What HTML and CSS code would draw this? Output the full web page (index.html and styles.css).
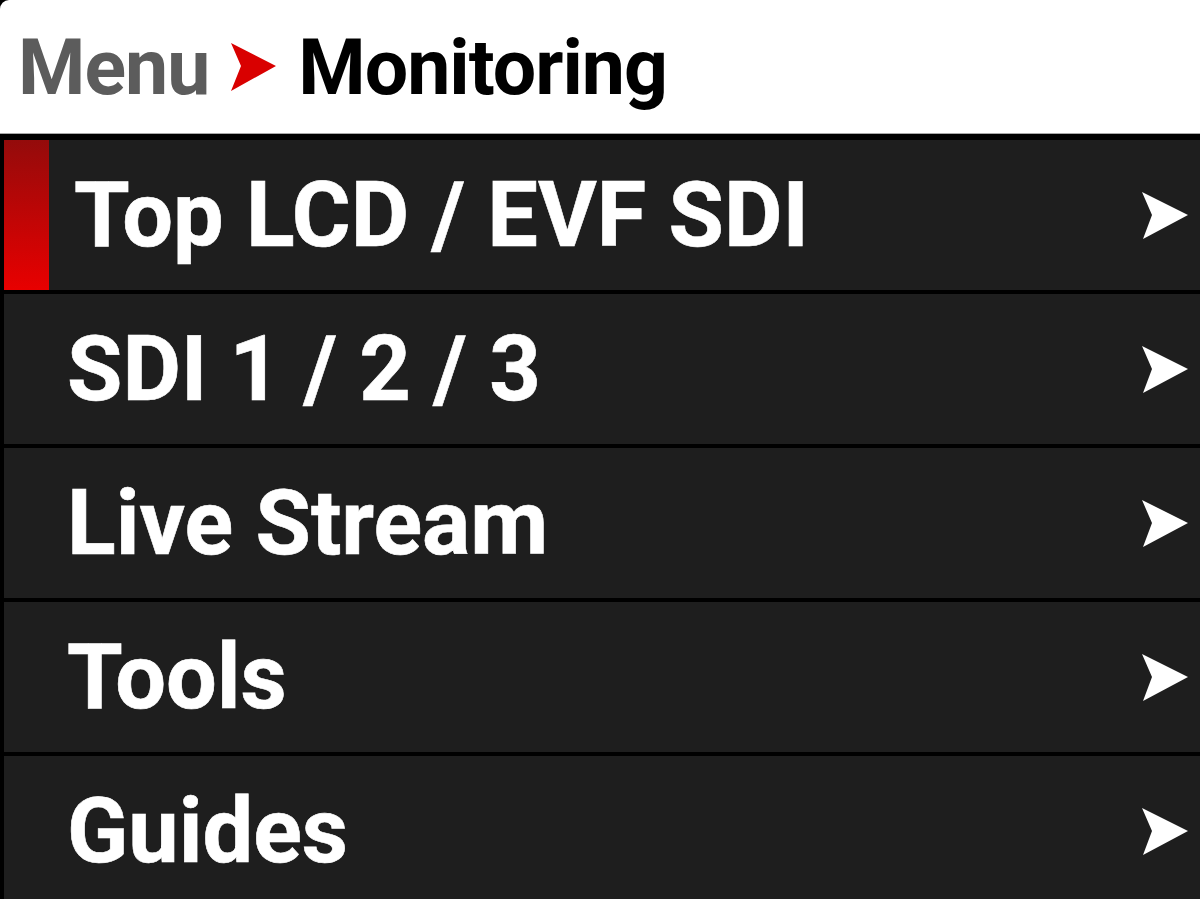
FILE: index.html
```html
<!DOCTYPE html>
<html lang="en">
<head>
<meta charset="utf-8">
<title>Menu - Monitoring</title>
<link rel="stylesheet" href="styles.css">
</head>
<body>
<div class="screen">
  <header class="crumb">
    <span class="crumb-parent">Menu</span>
    <svg class="crumb-sep" viewBox="0 0 45 48" width="45" height="48" aria-hidden="true">
      <path d="M0 0 L45 23 L0 48 L10 23 Z" fill="#d90000"/>
    </svg>
    <span class="crumb-current">Monitoring</span>
  </header>
  <ul class="menu">
    <li class="item selected"><span class="marker"></span><span class="label">Top LCD / EVF SDI</span><svg class="chev" viewBox="0 0 46 47" width="46" height="47" aria-hidden="true"><path d="M0 0 L46 23 L1 47 L10 23 Z" fill="#fff"/></svg></li>
    <li class="item"><span class="label">SDI 1 / 2 / 3</span><svg class="chev" viewBox="0 0 46 47" width="46" height="47" aria-hidden="true"><path d="M0 0 L46 23 L1 47 L10 23 Z" fill="#fff"/></svg></li>
    <li class="item"><span class="label">Live Stream</span><svg class="chev" viewBox="0 0 46 47" width="46" height="47" aria-hidden="true"><path d="M0 0 L46 23 L1 47 L10 23 Z" fill="#fff"/></svg></li>
    <li class="item"><span class="label">Tools</span><svg class="chev" viewBox="0 0 46 47" width="46" height="47" aria-hidden="true"><path d="M0 0 L46 23 L1 47 L10 23 Z" fill="#fff"/></svg></li>
    <li class="item"><span class="label">Guides</span><svg class="chev" viewBox="0 0 46 47" width="46" height="47" aria-hidden="true"><path d="M0 0 L46 23 L1 47 L10 23 Z" fill="#fff"/></svg></li>
  </ul>
</div>
</body>
</html>
```
FILE: styles.css
```css
html, body {
  margin: 0;
  padding: 0;
  background: #000;
  height: 100%;
  overflow: hidden;
}
.screen {
  width: 1200px;
  height: 899px;
  overflow: hidden;
  font-family: Roboto, "Liberation Sans", sans-serif;
  font-weight: 700;
}
.crumb {
  height: 133px;
  background: #fff;
  border-bottom: 1px solid #a8a8a8;
  border-top-left-radius: 9px;
  display: flex;
  align-items: center;
  padding-left: 18px;
  box-sizing: content-box;
  font-size: 77px;
  line-height: 1;
}
.crumb-parent {
  color: #5c5c5c;
  letter-spacing: -1px;
  padding-top: 4px;
}
.crumb-sep {
  margin: 0 22px 0 22px;
  flex: none;
}
.crumb-current {
  color: #000;
  letter-spacing: -1px;
  padding-top: 4px;
}
.menu {
  list-style: none;
  margin: 0;
  padding: 6px 0 0 4px;
  display: flex;
  flex-direction: column;
  gap: 4px;
}
.item {
  height: 150px;
  background: #1e1e1e;
  display: flex;
  align-items: center;
  padding-left: 63px;
  padding-right: 12px;
  color: #fff;
  font-size: 90px;
  line-height: 1;
  flex: none;
}
.item .label {
  flex: 1;
  padding-top: 2px;
  -webkit-text-stroke: 0.6px #fff;
}
.item.selected {
  padding-left: 0;
}
.marker {
  width: 45px;
  align-self: stretch;
  background: linear-gradient(to bottom, #940b0b, #e80000);
  margin-right: 25px;
  flex: none;
}
.chev {
  flex: none;
}
```
